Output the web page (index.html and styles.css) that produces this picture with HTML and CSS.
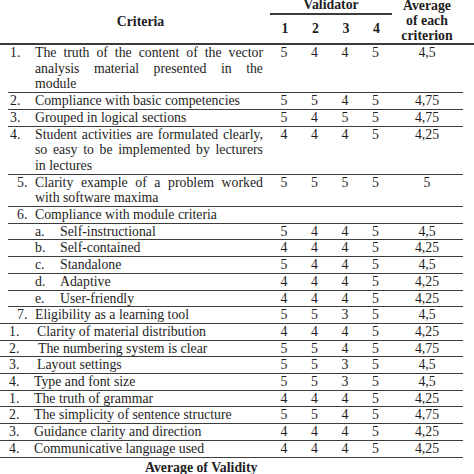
FILE: index.html
```html
<!DOCTYPE html>
<html>
<head>
<meta charset="utf-8">
<link rel="stylesheet" href="styles.css">
</head>
<body>
<div class="page">
  <div class="head">
    <div class="h-crit">Criteria</div>
    <div class="h-val">
      <div class="h-val-title">Validator</div>
      <div class="h-nums"><span>1</span><span>2</span><span>3</span><span>4</span></div>
    </div>
    <div class="h-avg">Average<br>of each<br>criterion</div>
  </div>

  <div class="table">
    <div class="row inset">
      <div class="crit"><span class="num">1.</span><span class="txt"><span class="j">The truth of the content of the vector</span><span class="j">analysis material presented in the</span><span>module</span></span></div>
      <div class="v">5</div><div class="v">4</div><div class="v">4</div><div class="v">5</div><div class="avg">4,5</div>
    </div>
    <div class="row inset">
      <div class="crit"><span class="num">2.</span><span class="txt">Compliance with basic competencies</span></div>
      <div class="v">5</div><div class="v">5</div><div class="v">4</div><div class="v">5</div><div class="avg">4,75</div>
    </div>
    <div class="row inset">
      <div class="crit"><span class="num">3.</span><span class="txt">Grouped in logical sections</span></div>
      <div class="v">5</div><div class="v">4</div><div class="v">5</div><div class="v">5</div><div class="avg">4,75</div>
    </div>
    <div class="row inset">
      <div class="crit"><span class="num">4.</span><span class="txt"><span class="j">Student activities are formulated clearly,</span><span class="j">so easy to be implemented by lecturers</span><span>in lectures</span></span></div>
      <div class="v">4</div><div class="v">4</div><div class="v">4</div><div class="v">5</div><div class="avg">4,25</div>
    </div>
    <div class="row inset">
      <div class="crit"><span class="num mid">5.</span><span class="txt"><span class="j">Clarity example of a problem worked</span><span>with software maxima</span></span></div>
      <div class="v">5</div><div class="v">5</div><div class="v">5</div><div class="v">5</div><div class="avg">5</div>
    </div>
    <div class="row inset">
      <div class="crit"><span class="num mid">6.</span><span class="txt">Compliance with module criteria</span></div>
      <div class="v"></div><div class="v"></div><div class="v"></div><div class="v"></div><div class="avg"></div>
    </div>
    <div class="row inset">
      <div class="crit sub"><span class="num">a.</span><span class="txt">Self-instructional</span></div>
      <div class="v">5</div><div class="v">4</div><div class="v">4</div><div class="v">5</div><div class="avg">4,5</div>
    </div>
    <div class="row inset">
      <div class="crit sub"><span class="num">b.</span><span class="txt">Self-contained</span></div>
      <div class="v">4</div><div class="v">4</div><div class="v">4</div><div class="v">5</div><div class="avg">4,25</div>
    </div>
    <div class="row inset">
      <div class="crit sub"><span class="num">c.</span><span class="txt">Standalone</span></div>
      <div class="v">5</div><div class="v">4</div><div class="v">4</div><div class="v">5</div><div class="avg">4,5</div>
    </div>
    <div class="row inset">
      <div class="crit sub"><span class="num">d.</span><span class="txt">Adaptive</span></div>
      <div class="v">4</div><div class="v">4</div><div class="v">4</div><div class="v">5</div><div class="avg">4,25</div>
    </div>
    <div class="row inset">
      <div class="crit sub"><span class="num">e.</span><span class="txt">User-friendly</span></div>
      <div class="v">4</div><div class="v">4</div><div class="v">4</div><div class="v">5</div><div class="avg">4,25</div>
    </div>
    <div class="row">
      <div class="crit"><span class="num mid">7.</span><span class="txt">Eligibility as a learning tool</span></div>
      <div class="v">5</div><div class="v">5</div><div class="v">3</div><div class="v">5</div><div class="avg">4,5</div>
    </div>
    <div class="row">
      <div class="crit"><span class="num">1.</span><span class="txt wide">Clarity of material distribution</span></div>
      <div class="v">4</div><div class="v">4</div><div class="v">4</div><div class="v">5</div><div class="avg">4,25</div>
    </div>
    <div class="row">
      <div class="crit"><span class="num">2.</span><span class="txt wider">The numbering system is clear</span></div>
      <div class="v">5</div><div class="v">5</div><div class="v">4</div><div class="v">5</div><div class="avg">4,75</div>
    </div>
    <div class="row">
      <div class="crit"><span class="num">3.</span><span class="txt wide">Layout settings</span></div>
      <div class="v">5</div><div class="v">5</div><div class="v">3</div><div class="v">5</div><div class="avg">4,5</div>
    </div>
    <div class="row">
      <div class="crit"><span class="num">4.</span><span class="txt">Type and font size</span></div>
      <div class="v">5</div><div class="v">5</div><div class="v">3</div><div class="v">5</div><div class="avg">4,5</div>
    </div>
    <div class="row">
      <div class="crit"><span class="num">1.</span><span class="txt">The truth of grammar</span></div>
      <div class="v">4</div><div class="v">4</div><div class="v">4</div><div class="v">5</div><div class="avg">4,25</div>
    </div>
    <div class="row">
      <div class="crit"><span class="num">2.</span><span class="txt">The simplicity of sentence structure</span></div>
      <div class="v">5</div><div class="v">5</div><div class="v">4</div><div class="v">5</div><div class="avg">4,75</div>
    </div>
    <div class="row">
      <div class="crit"><span class="num">3.</span><span class="txt">Guidance clarity and direction</span></div>
      <div class="v">4</div><div class="v">4</div><div class="v">4</div><div class="v">5</div><div class="avg">4,25</div>
    </div>
    <div class="row">
      <div class="crit"><span class="num">4.</span><span class="txt">Communicative language used</span></div>
      <div class="v">4</div><div class="v">4</div><div class="v">4</div><div class="v">5</div><div class="avg">4,25</div>
    </div>
  </div>
  <div class="foot">Average of Validity</div>
</div>
</body>
</html>
```
FILE: styles.css
```css
html, body {
  margin: 0;
  padding: 0;
  background: #ffffff;
}
body {
  width: 474px;
  height: 474px;
  overflow: hidden;
  font-family: "Liberation Serif", "Times New Roman", serif;
  font-size: 13.8px;
  color: #1e1e1e;
}
.page {
  width: 474px;
}
.head {
  display: flex;
  height: 43px;
  border-bottom: 2px solid #3c3c3c;
  font-weight: bold;
}
.h-crit {
  width: 269px;
  text-align: center;
  padding-top: 13.5px;
  padding-left: 12px;
  box-sizing: border-box;
  line-height: 15.6px;
}
.h-val {
  width: 122px;
  margin-left: 1px;
  margin-top: -3.5px;
  display: flex;
  flex-direction: column;
}
.h-val-title {
  text-align: center;
  line-height: 15.6px;
  padding-bottom: 1px;
  border-bottom: 2px solid #3c3c3c;
}
.h-nums {
  display: grid;
  grid-template-columns: 30px 31px 30px 31px;
  margin-top: 5.5px;
  line-height: 15.6px;
  text-align: center;
}
.h-avg {
  width: 72px;
  margin-left: -1px;
  margin-top: -2.2px;
  text-align: center;
  line-height: 15px;
}
.table {
  width: 463px;
}
.row {
  display: grid;
  grid-template-columns: 269px 30px 31px 30px 31px 72px;
  border-bottom: 1px solid #3c3c3c;
  line-height: 15.7px;
}
.row.inset {
  margin-left: 8px;
  grid-template-columns: 261px 30px 31px 30px 31px 72px;
}
.crit {
  display: flex;
  padding-right: 6px;
  padding-left: 9px;
}
.row.inset .crit {
  padding-left: 2px;
}
.row.inset .crit.sub {
  padding-left: 27px;
}
.num {
  width: 25px;
  flex: none;
}
.num.mid {
  padding-left: 7px;
  width: 18px;
}
.row:not(.inset) .num.mid {
  padding-left: 8px;
  width: 18px;
}
.txt {
  flex: 1;
  display: flex;
  flex-direction: column;
}
.txt.wide {
  padding-left: 3px;
}
.txt.wider {
  padding-left: 4px;
}
.j {
  text-align: justify;
  text-align-last: justify;
}
.v {
  text-align: center;
}
.avg {
  text-align: center;
}
.foot {
  font-weight: bold;
  padding-left: 145px;
  padding-top: 2px;
  line-height: 15.7px;
}
```
